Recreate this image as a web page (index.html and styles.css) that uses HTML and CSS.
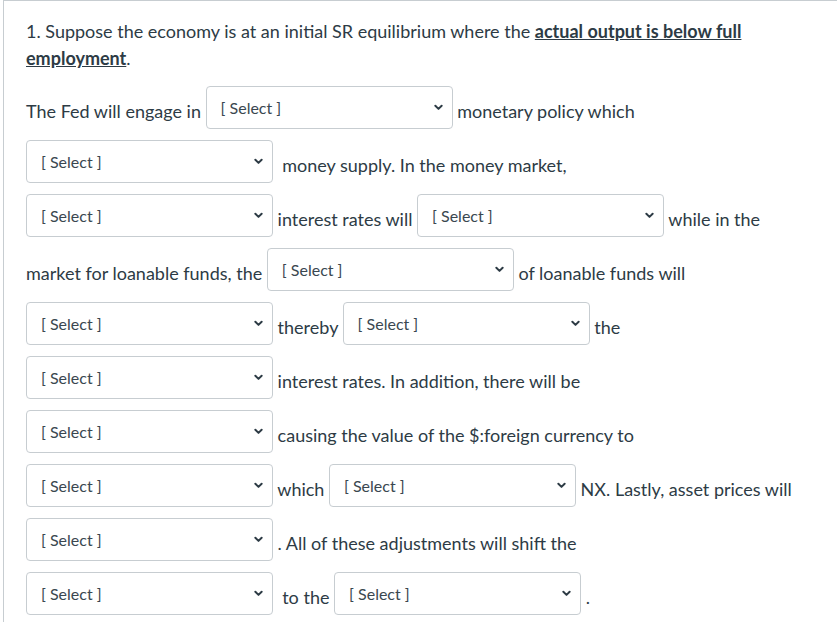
FILE: index.html
```html
<!DOCTYPE html>
<html lang="en">
<head>
<meta charset="utf-8">
<title>Question 1</title>
<link rel="stylesheet" href="styles.css">
</head>
<body>
<div class="question">
  <p class="prompt">1. Suppose the economy is at an initial SR equilibrium where the <strong class="emph">actual output is below full employment</strong>.</p>
  <p class="answer">The Fed will engage in <span class="select"><span class="label">[ Select ]</span><svg class="chev" viewBox="0 0 10 7"><polyline points="1.5,1.5 5,5 8.5,1.5"/></svg></span> monetary policy which <span class="select"><span class="label">[ Select ]</span><svg class="chev" viewBox="0 0 10 7"><polyline points="1.5,1.5 5,5 8.5,1.5"/></svg></span>&nbsp; money supply. In the money market, <span class="select"><span class="label">[ Select ]</span><svg class="chev" viewBox="0 0 10 7"><polyline points="1.5,1.5 5,5 8.5,1.5"/></svg></span> interest rates will <span class="select"><span class="label">[ Select ]</span><svg class="chev" viewBox="0 0 10 7"><polyline points="1.5,1.5 5,5 8.5,1.5"/></svg></span> while in the market for loanable funds, the <span class="select"><span class="label">[ Select ]</span><svg class="chev" viewBox="0 0 10 7"><polyline points="1.5,1.5 5,5 8.5,1.5"/></svg></span> of loanable funds will <span class="select"><span class="label">[ Select ]</span><svg class="chev" viewBox="0 0 10 7"><polyline points="1.5,1.5 5,5 8.5,1.5"/></svg></span> thereby <span class="select"><span class="label">[ Select ]</span><svg class="chev" viewBox="0 0 10 7"><polyline points="1.5,1.5 5,5 8.5,1.5"/></svg></span> the <span class="select"><span class="label">[ Select ]</span><svg class="chev" viewBox="0 0 10 7"><polyline points="1.5,1.5 5,5 8.5,1.5"/></svg></span> interest rates. In addition, there will be <span class="select"><span class="label">[ Select ]</span><svg class="chev" viewBox="0 0 10 7"><polyline points="1.5,1.5 5,5 8.5,1.5"/></svg></span> causing the value of the $:foreign currency to <span class="select"><span class="label">[ Select ]</span><svg class="chev" viewBox="0 0 10 7"><polyline points="1.5,1.5 5,5 8.5,1.5"/></svg></span> which <span class="select"><span class="label">[ Select ]</span><svg class="chev" viewBox="0 0 10 7"><polyline points="1.5,1.5 5,5 8.5,1.5"/></svg></span> NX. Lastly, asset prices will <span class="select"><span class="label">[ Select ]</span><svg class="chev" viewBox="0 0 10 7"><polyline points="1.5,1.5 5,5 8.5,1.5"/></svg></span>&nbsp;. All of these adjustments will shift the <span class="select"><span class="label">[ Select ]</span><svg class="chev" viewBox="0 0 10 7"><polyline points="1.5,1.5 5,5 8.5,1.5"/></svg></span>&nbsp; to the <span class="select"><span class="label">[ Select ]</span><svg class="chev" viewBox="0 0 10 7"><polyline points="1.5,1.5 5,5 8.5,1.5"/></svg></span> .</p>
</div>
</body>
</html>
```

FILE: styles.css
```css
html, body {
  margin: 0;
  background: #ffffff;
}

body {
  font-family: Lato, "Helvetica Neue", Arial, sans-serif;
  color: #2d3b45;
}

.question {
  margin-left: 3px;
  border-top: 1px solid #c7cdd1;
  border-left: 1px solid #c7cdd1;
  padding: 17px 26px 0 22px;
  min-height: 640px;
}

.prompt {
  margin: 0;
  font-size: 18px;
  line-height: 27px;
}

.emph {
  font-weight: 700;
  text-decoration: underline;
}

.answer {
  margin: 9px 0 0;
  font-size: 18px;
  line-height: 27px;
}

.select {
  display: inline-flex;
  align-items: center;
  box-sizing: border-box;
  width: 247px;
  height: 43px;
  margin: 5px 0 6px;
  padding: 0 9px 0 14px;
  border: 1px solid #c7cdd1;
  border-radius: 4px;
  background: #ffffff;
  font-size: 16px;
  line-height: 20px;
  color: #3a4750;
  vertical-align: 4px;
}

.label {
  flex: 1;
}

.chev {
  width: 9px;
  height: 7px;
  fill: none;
  stroke: #2d3b45;
  stroke-width: 2.2;
  stroke-linecap: round;
  stroke-linejoin: round;
}
```
